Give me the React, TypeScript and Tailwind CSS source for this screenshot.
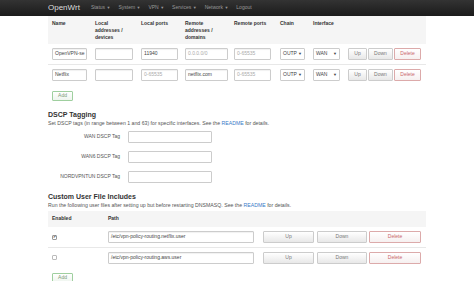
import React from "react";

const menu = ["Status", "System", "VPN", "Services", "Network"];

const cols = [
  { label: ["Name"], w: "w-[43px]" },
  { label: ["Local", "addresses /", "devices"], w: "w-[46px]" },
  { label: ["Local ports"], w: "w-[44px]" },
  { label: ["Remote", "addresses /", "domains"], w: "w-[49px]" },
  { label: ["Remote ports"], w: "w-[46px]" },
  { label: ["Chain"], w: "w-[33px]" },
  { label: ["Interface"], w: "w-[35px]" },
];

const rules = [
  { name: "OpenVPN-se", local: "", ports: "11940", remote: "", rports: "" },
  { name: "Netflix", local: "", ports: "", remote: "netflix.com", rports: "" },
];

const Field = ({
  value,
  placeholder,
  className,
}: {
  value?: string;
  placeholder?: string;
  className: string;
}) => (
  <div
    className={`h-[12px] border border-[#ccc] rounded-[1px] bg-white shadow-[inset_0_1px_1px_rgba(0,0,0,0.06)] flex items-center px-[2px] text-[5px] overflow-hidden whitespace-nowrap ${className}`}
  >
    {value ? (
      <span className="text-[#444]">{value}</span>
    ) : (
      <span className="text-[#aaa]">{placeholder}</span>
    )}
  </div>
);

const Select = ({ value, className }: { value: string; className: string }) => (
  <div
    className={`h-[12px] border border-[#ccc] rounded-[1px] bg-white flex items-center justify-between px-[2px] text-[5px] text-[#444] ${className}`}
  >
    <span>{value}</span>
    <span className="text-[4px]">▼</span>
  </div>
);

const Btn = ({
  label,
  className,
  danger,
}: {
  label: string;
  className: string;
  danger?: boolean;
}) => (
  <div
    className={`h-[12px] rounded-[1px] border flex items-center justify-center text-[5px] ${
      danger
        ? "border-[#dcaaaa] bg-gradient-to-b from-white to-[#f6f0f0] text-[#c9686a]"
        : "border-[#ccc] bg-gradient-to-b from-white to-[#e8e8e8] text-[#777]"
    } ${className}`}
  >
    {label}
  </div>
);

const AddBtn = () => (
  <div className="w-[21px] h-[10px] ml-[4px] rounded-[1px] border border-[#9fcf9f] bg-gradient-to-b from-white to-[#eef5ee] flex items-center justify-center text-[5px] text-[#7a9a7a]">
    Add
  </div>
);

export default function App() {
  return (
    <div className="w-[474px] h-[281px] overflow-hidden bg-white font-['Liberation_Sans',Arial,sans-serif] text-[#333]">
      <nav className="h-[16px] bg-gradient-to-b from-[#333] to-[#1b1b1b] flex items-center pl-[48px]">
        <span className="text-[8px] text-[#ddd] mr-[11px]">OpenWrt</span>
        <div className="flex items-center gap-[8px] text-[5px] text-[#999]">
          {menu.map((m) => (
            <span key={m}>
              {m} <span className="text-[4px]">▼</span>
            </span>
          ))}
          <span>Logout</span>
        </div>
      </nav>

      <div className="ml-[48px] w-[378px]">
        {/* rules table */}
        <div className="h-[28px] bg-[#f5f5f5] flex px-[4px] pt-[4px] text-[5px] leading-[7px] font-semibold text-[#333]">
          {cols.map((c) => (
            <div key={c.label[0]} className={`${c.w} flex flex-col`}>
              {c.label.map((l) => (
                <span key={l}>{l}</span>
              ))}
            </div>
          ))}
        </div>
        {rules.map((r, i) => (
          <div
            key={r.name}
            className={`h-[20px] flex items-center px-[4px] ${
              i > 0 ? "border-t border-[#e8e8e8]" : ""
            }`}
          >
            <div className="w-[43px]">
              <Field value={r.name} className="w-[35px]" />
            </div>
            <div className="w-[46px]">
              <Field value={r.local} className="w-[38px]" />
            </div>
            <div className="w-[44px]">
              <Field value={r.ports} placeholder="0-65535" className="w-[37px]" />
            </div>
            <div className="w-[49px]">
              <Field value={r.remote} placeholder="0.0.0.0/0" className="w-[43px]" />
            </div>
            <div className="w-[46px]">
              <Field value={r.rports} placeholder="0-65535" className="w-[37px]" />
            </div>
            <div className="w-[33px]">
              <Select value="OUTP" className="w-[25px]" />
            </div>
            <div className="w-[35px]">
              <Select value="WAN" className="w-[27px]" />
            </div>
            <div className="flex gap-[1px]">
              <Btn label="Up" className="w-[19px]" />
              <Btn label="Down" className="w-[25px]" />
              <Btn label="Delete" className="w-[27px]" danger />
            </div>
          </div>
        ))}
        <div className="mt-[7px]">
          <AddBtn />
        </div>

        {/* DSCP */}
        <h2 className="mt-[9px] text-[7px] leading-[10px] font-bold text-[#333]">DSCP Tagging</h2>
        <p className="text-[5.2px] leading-[6px] text-[#555]">
          Set DSCP tags (in range between 1 and 63) for specific interfaces. See the{" "}
          <span className="text-[#3b7bc8]">README</span> for details.
        </p>
        <div className="mt-[5px] flex flex-col gap-[8px]">
          {["WAN DSCP Tag", "WAN6 DSCP Tag", "NORDVPNTUN DSCP Tag"].map((l) => (
            <div key={l} className="flex items-center">
              <span className="w-[72px] text-right text-[5px] text-[#555]">{l}</span>
              <div className="ml-[8px] w-[84px] h-[12px] border border-[#ccc] rounded-[1px] bg-white" />
            </div>
          ))}
        </div>

        {/* custom user files */}
        <h2 className="mt-[9px] text-[7px] leading-[10px] font-bold text-[#333]">
          Custom User File Includes
        </h2>
        <p className="text-[5.2px] leading-[6px] text-[#555]">
          Run the following user files after setting up but before restarting DNSMASQ. See the{" "}
          <span className="text-[#3b7bc8]">README</span> for details.
        </p>
        <div className="mt-[3px] h-[16px] bg-[#f5f5f5] flex items-center px-[4px] text-[5px] font-semibold">
          <span className="w-[56px]">Enabled</span>
          <span>Path</span>
        </div>
        {[
          { on: true, path: "/etc/vpn-policy-routing.netflix.user" },
          { on: false, path: "/etc/vpn-policy-routing.aws.user" },
        ].map((f, i) => (
          <div
            key={f.path}
            className={`h-[20px] flex items-center px-[4px] ${
              i > 0 ? "border-t border-[#e8e8e8]" : ""
            }`}
          >
            <div className="w-[56px]">
              <div
                className={`w-[5px] h-[5px] border rounded-[1px] flex items-center justify-center text-[4px] leading-none ${
                  f.on ? "border-[#999] text-[#444]" : "border-[#bbb]"
                }`}
              >
                {f.on ? "✔" : ""}
              </div>
            </div>
            <Field value={f.path} className="w-[146px]" />
            <Btn label="Up" className="ml-[9px] w-[51px]" />
            <Btn label="Down" className="ml-[3px] w-[50px]" />
            <Btn label="Delete" className="ml-[2px] w-[52px]" danger />
          </div>
        ))}
        <div className="mt-[6px]">
          <AddBtn />
        </div>
      </div>
    </div>
  );
}
